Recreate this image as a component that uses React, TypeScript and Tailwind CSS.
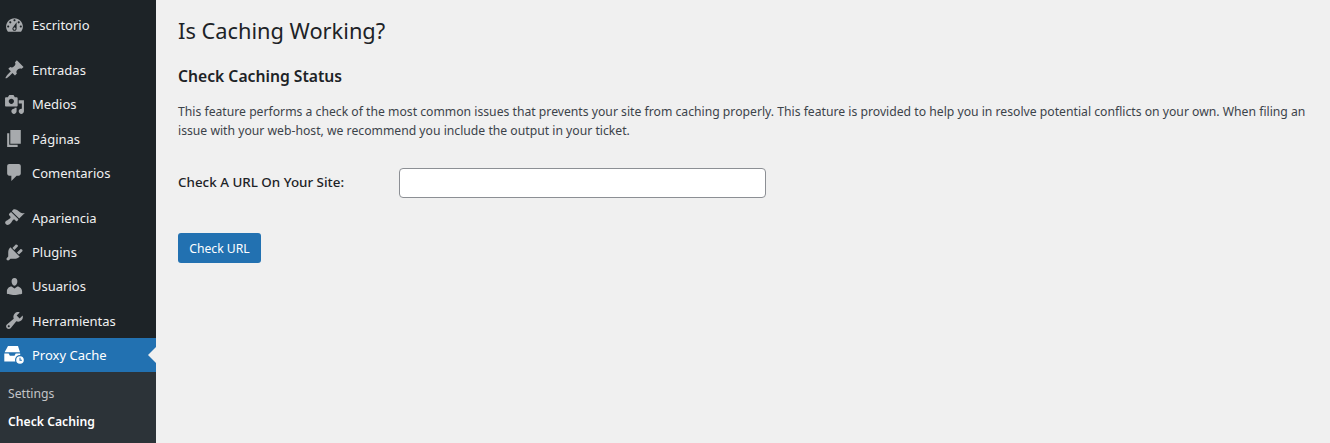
import type { ReactNode } from 'react'

const font = { sans: 'font-["Noto_Sans",sans-serif]' }

const icons: Record<string, ReactNode> = {
  dashboard: <path d="M3.76 16h12.48c1.1-1.37 1.76-3.11 1.76-5 0-4.42-3.58-8-8-8s-8 3.58-8 8c0 1.89.66 3.63 1.76 5zM10 4c.55 0 1 .45 1 1s-.45 1-1 1-1-.45-1-1 .45-1 1-1zM6 6c.55 0 1 .45 1 1s-.45 1-1 1-1-.45-1-1 .45-1 1-1zm8 0c.55 0 1 .45 1 1s-.45 1-1 1-1-.45-1-1 .45-1 1-1zm-5.37 5.55L12 7v6c0 1.1-.9 2-2 2s-2-.9-2-2c0-.57.24-1.08.63-1.45zM4 10c.55 0 1 .45 1 1s-.45 1-1 1-1-.45-1-1 .45-1 1-1zm12 0c.55 0 1 .45 1 1s-.45 1-1 1-1-.45-1-1 .45-1 1-1zm-5 3c0-.55-.45-1-1-1s-1 .45-1 1 .45 1 1 1 1-.45 1-1z" fillRule="evenodd" />,
  post: <path d="M10.44 3.02l1.82-1.82 6.36 6.35-1.83 1.82c-1.05-.68-2.48-.57-3.41.36l-.75.75c-.92.93-1.04 2.35-.35 3.41l-1.83 1.82-2.41-2.41-2.8 2.79c-.42.42-3.38 2.71-3.8 2.29s1.86-3.39 2.28-3.81l2.79-2.79L4.1 9.36l1.83-1.82c1.05.69 2.48.57 3.4-.36l.75-.75c.93-.92 1.05-2.35.36-3.41z" />,
  media: <path d="M13 11V4c0-.55-.45-1-1-1h-1.67L9 1H5L3.67 3H2c-.55 0-1 .45-1 1v7c0 .55.45 1 1 1h10c.55 0 1-.45 1-1zM7 4.5c1.38 0 2.5 1.12 2.5 2.5S8.38 9.5 7 9.5 4.5 8.38 4.5 7 5.62 4.5 7 4.5zM14 6h5v10.5c0 1.38-1.12 2.5-2.5 2.5S14 17.88 14 16.5s1.12-2.5 2.5-2.5c.17 0 .34.02.5.05V9h-3V6zm-4 8.05V13h2v3.5c0 1.38-1.12 2.5-2.5 2.5S7 17.88 7 16.5 8.12 14 9.5 14c.17 0 .34.02.5.05z" fillRule="evenodd" />,
  page: <path d="M6 15V2h10v13H6zm-1 1h8v2H3V5h2v11z" />,
  comments: <path d="M5 2h9c1.1 0 2 .9 2 2v7c0 1.1-.9 2-2 2h-2l-5 5v-5H5c-1.1 0-2-.9-2-2V4c0-1.1.9-2 2-2z" />,
  appearance: <path d="M14.48 11.06L7.41 3.99l1.5-1.5c.5-.56 2.3-.47 3.51.32 1.21.8 1.43 1.28 2.91 2.1 1.18.64 2.45 1.26 4.45.85zm-.71.71L6.7 4.7 4.93 6.47c-.39.39-.39 1.02 0 1.41l1.06 1.06c.39.39.39 1.03 0 1.42-.6.6-1.43 1.11-2.21 1.69-.35.26-.7.53-1.01.84C1.43 13.23.4 14.98 1.72 16.3c.12.12.25.23.38.33.01.01.01.02.02.03h.01c1.28.95 2.85.11 4.17-1.21.31-.31.58-.66.84-1.01.58-.78 1.09-1.61 1.69-2.21.39-.39 1.03-.39 1.42 0l1.06 1.06c.39.39 1.02.39 1.41 0z" />,
  plugins: <path d="M13.11 4.36L9.87 7.6 8 5.73l3.24-3.24c.35-.34 1.05-.2 1.56.32.52.51.66 1.21.31 1.55zm-8 1.77l.91-1.12 9.01 9.01-1.19.84c-.71.71-2.63 1.16-3.82 1.16H6.14L4.9 17.26c-.59.59-1.54.59-2.12 0-.59-.58-.59-1.53 0-2.12l1.24-1.24v-3.88c0-1.13.4-3.19 1.09-3.89zm7.26 3.97l3.24-3.24c.34-.35 1.04-.21 1.55.31.52.51.66 1.21.31 1.55l-3.24 3.25z" />,
  users: <path d="M10 9.25c-2.27 0-2.73-3.44-2.73-3.44C7 4.02 7.82 2 9.97 2c2.16 0 2.98 2.02 2.71 3.81 0 0-.41 3.44-2.68 3.44zm0 2.57L12.72 10c2.39 0 4.52 2.33 4.52 4.53v2.49s-3.65 1.13-7.24 1.13c-3.65 0-7.24-1.13-7.24-1.13v-2.49c0-2.25 1.94-4.48 4.47-4.48z" />,
  tools: <path d="M16.68 9.77c-1.34 1.34-3.3 1.67-4.95.99l-5.41 6.52c-.99.99-2.59.99-3.58 0s-.99-2.59 0-3.57l6.52-5.42c-.68-1.65-.35-3.61.99-4.95 1.28-1.28 3.12-1.62 4.72-1.06l-2.89 2.89 2.82 2.82 2.86-2.87c.53 1.58.18 3.39-1.08 4.65zM3.81 16.21c.4.39 1.04.39 1.43 0 .4-.4.4-1.04 0-1.43-.39-.4-1.03-.4-1.43 0-.39.39-.39 1.03 0 1.43z" fillRule="evenodd" />,
}

const groups = [
  [{ label: 'Escritorio', icon: 'dashboard' }],
  [
    { label: 'Entradas', icon: 'post' },
    { label: 'Medios', icon: 'media' },
    { label: 'Páginas', icon: 'page' },
    { label: 'Comentarios', icon: 'comments' },
  ],
  [
    { label: 'Apariencia', icon: 'appearance' },
    { label: 'Plugins', icon: 'plugins' },
    { label: 'Usuarios', icon: 'users' },
    { label: 'Herramientas', icon: 'tools' },
  ],
]

function MenuItem({ label, icon }: { label: string; icon: string }) {
  return (
    <div className="flex h-[34.33px] items-center text-[#f0f0f1]">
      <svg viewBox="0 0 20 20" className="ml-[3.5px] h-[21px] w-[21px] fill-[#a7aaad]">
        {icons[icon]}
      </svg>
      <span className="ml-[7.5px] pt-[1.5px] text-[13px]">{label}</span>
    </div>
  )
}

export default function App() {
  return (
    <div className={`flex h-[443px] w-[1330px] overflow-hidden bg-[#f0f0f0] ${font.sans}`}>
      {/* Sidebar */}
      <div className="flex w-[156px] shrink-0 flex-col bg-[#1d2327] pt-[8px]">
        {groups.map((items) => (
          <div key={items[0].label} className="mb-[10.5px]">
            {items.map((item) => (
              <MenuItem key={item.label} {...item} />
            ))}
          </div>
        ))}
        <div className="-mt-[10.5px] relative flex h-[34px] items-center bg-[#2271b1] text-white">
          <svg viewBox="0 0 21 20" className="ml-[4px] h-[20px] w-[21px]">
            <path className="fill-white" d="M4 1h10l2 6.2H.6z" />
            <path className="fill-white" d="M.3 8.6h4.4l1.2 2.2h4.6l1.2-2.2h4.5V16.5H.3z" />
            <circle cx="16" cy="15" r="5" className="fill-[#2271b1]" />
            <circle cx="16" cy="15" r="3.8" className="fill-white" />
            <path className="fill-[#2271b1]" d="M15.5 12.8h1v2h1.4v1h-2.4z" />
          </svg>
          <span className="ml-[7px] pt-[1.5px] text-[13px]">Proxy Cache</span>
          <div className="absolute right-0 top-[9px] h-0 w-0 border-y-[8px] border-r-[8px] border-y-transparent border-r-[#f0f0f0]" />
        </div>
        <div className="flex-1 bg-[#2c3338] pt-[8px] text-[12.2px]">
          <div className="flex h-[28px] items-center pl-[8px] text-[#c3c4c7]">Settings</div>
          <div className="flex h-[28px] items-center pl-[8px] font-semibold text-white">Check Caching</div>
        </div>
      </div>

      {/* Content */}
      <div className="flex-1 pl-[22px] pr-[20px] text-[#3c434a]">
        <h1 className="mt-[15px] text-[21.8px] leading-[32px] text-[#1d2327]">Is Caching Working?</h1>
        <h2 className="mt-[17px] text-[15.7px] font-semibold leading-[24px] text-[#1d2327]">Check Caching Status</h2>
        <p className="mt-[14px] text-[12.2px] leading-[19px]">
          This feature performs a check of the most common issues that prevents your site from caching properly. This feature is provided to help you in resolve potential conflicts on your own. When filing an issue with your web-host, we recommend you include the output in your ticket.
        </p>
        <div className="mt-[28px] flex items-center">
          <label className="w-[221px] pb-[2px] text-[13.4px] font-medium text-[#1d2327]">Check A URL On Your Site:</label>
          <input className="h-[30px] w-[367px] rounded-[4px] border border-[#8c8f94] bg-white" />
        </div>
        <button className="mt-[35px] h-[30px] w-[83px] rounded-[3px] bg-[#2271b1] pt-[2px] text-[12.2px] text-white">Check URL</button>
      </div>
    </div>
  )
}
